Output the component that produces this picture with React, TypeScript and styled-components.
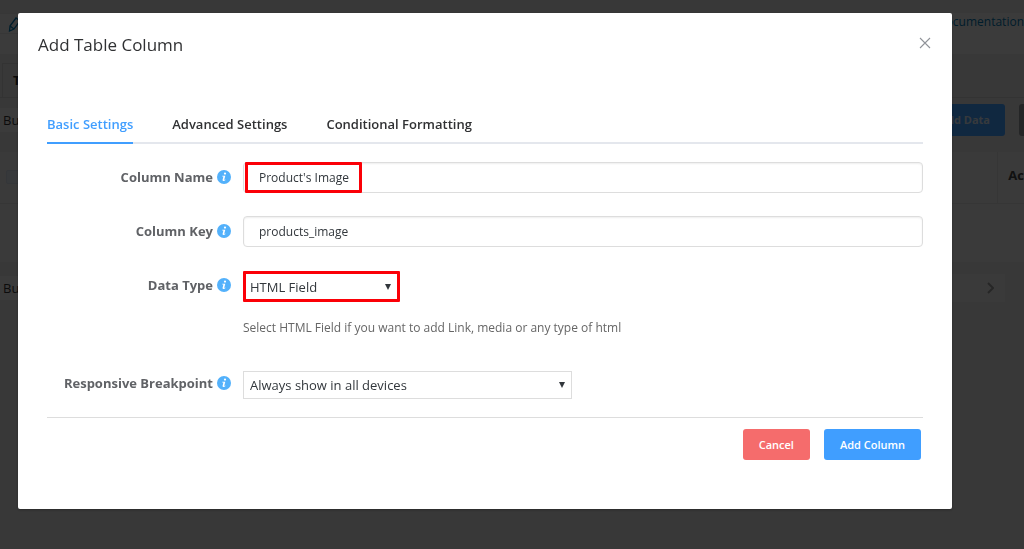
import React from "react";
import styled, { createGlobalStyle, css } from "styled-components";

const GlobalStyle = createGlobalStyle`
  *, *::before, *::after { box-sizing: border-box; }
  body {
    margin: 0;
    background: #dedede;
    font-family: "Open Sans", "Noto Sans", sans-serif;
    font-size: 13px;
    color: #444;
  }
  button, input, select { font-family: inherit; }
`;

/* ---------- admin page under the dialog ---------- */

const Page = styled.div`
  min-height: 100vh;
  overflow: hidden;
`;

const TopBar = styled.header`
  display: flex;
  justify-content: space-between;
  margin-top: 13px;
  height: 41px;
  background: #ececec;
`;

const EditLink = styled.a`
  display: flex;
  align-items: center;
  width: 120px;
  height: 21px;
  padding-left: 8px;
  border: 1px solid #dcdcdc;
  border-left: 0;
  color: #0073aa;
`;

const DocLink = styled.a`
  font-size: 12px;
  line-height: 18px;
  color: #0073aa;
  text-decoration: none;
`;

const PageTabs = styled.nav`
  display: flex;
  height: 44px;
  padding: 9px 0 0 2px;
  border-bottom: 1px solid #ccc;
`;

const PageTab = styled.a`
  width: 110px;
  padding-left: 10px;
  border: 1px solid #ccc;
  border-bottom: 0;
  font-weight: 700;
  line-height: 33px;
  color: #222;
  text-decoration: none;
`;

const ActionBar = styled.div<{ $foot?: boolean }>`
  display: flex;
  justify-content: space-between;
  align-items: center;
  height: 54px;
  padding-bottom: ${(p) => (p.$foot ? 3 : 11)}px;
`;

const BulkButton = styled.button`
  width: 120px;
  height: 26px;
  padding: 0 3px;
  border: 1px solid #ddd;
  border-left: 0;
  background: #ececec;
  font-size: 13px;
  text-align: left;
  color: #333;
`;

const ActionGroup = styled.div`
  display: flex;
  gap: 14px;
`;

const DataButton = styled.button<{ $grey?: boolean }>`
  width: ${(p) => (p.$grey ? 20 : 86)}px;
  margin-right: ${(p) => (p.$grey ? -15 : 0)}px;
  height: 32px;
  padding: 0 ${(p) => (p.$grey ? 0 : 15)}px;
  border: 0;
  border-radius: 3px;
  background: ${(p) => (p.$grey ? "#909399" : "#409eff")};
  font-size: 11px;
  font-weight: 700;
  text-align: right;
  color: #d8e4f0;
  white-space: nowrap;
`;

const Records = styled.table`
  width: 100%;
  height: 110px;
  border-collapse: collapse;
  background: #e6e6e6;

  th { height: 51px; border-bottom: 1px solid #d8d8d8; text-align: left; padding: 0 6px; }
  th:last-child { width: 25px; padding: 0 0 4px 10px; border-left: 1px solid #d8d8d8; }
`;

const RowTick = styled.input`
  appearance: none;
  display: block;
  width: 14px;
  height: 14px;
  margin: 0;
  border: 1px solid #cdd6e2;
  border-radius: 2px;
  background: #dce2ea;
`;

const Pager = styled.button`
  display: flex;
  align-items: center;
  justify-content: flex-end;
  width: 120px;
  height: 28px;
  margin-right: 19px;
  padding: 0 11px;
  border: 0;
  background: #e6e6e6;
  color: #999;
`;

/* ---------- dialog ---------- */

const Overlay = styled.div`
  position: fixed;
  inset: 0;
  padding: 13px 72px 0 18px;
  background: rgba(0, 0, 0, 0.75);
`;

const Dialog = styled.section`
  padding-bottom: 49px;
  border-radius: 2px;
  background: #fff;
  box-shadow: 0 1px 3px rgba(0, 0, 0, 0.3);
`;

const DialogHead = styled.header`
  display: flex;
  justify-content: space-between;
  align-items: flex-start;
  padding: 20px 20px 0;
`;

const Title = styled.h2`
  margin: 0;
  font-size: 17px;
  font-weight: 400;
  line-height: 24px;
  color: #303133;
`;

const CloseButton = styled.button`
  display: flex;
  padding: 3px 0;
  border: 0;
  background: none;
  color: #909399;
`;

const DialogBody = styled.form`
  padding: 49px 29px 0;
`;

const Tabs = styled.nav`
  display: flex;
  gap: 39px;
  height: 38px;
  margin-bottom: 18px;
  border-bottom: 2px solid #e4e7ed;
`;

const Tab = styled.button<{ $active?: boolean }>`
  height: 38px;
  padding: 0;
  border: 0;
  border-bottom: 2px solid ${(p) => (p.$active ? "#409eff" : "transparent")};
  background: none;
  font-size: 13px;
  font-weight: 600;
  color: ${(p) => (p.$active ? "#409eff" : "#303133")};
`;

const Field = styled.div<{ $gap: number }>`
  display: grid;
  grid-template-columns: 184px 1fr;
  column-gap: 12px;
  margin-bottom: ${(p) => p.$gap}px;
`;

const LabelCell = styled.div`
  display: flex;
  justify-content: flex-end;
  align-items: center;
  gap: 4px;
  height: 30px;
`;

const Label = styled.label`
  font-size: 13px;
  font-weight: 700;
  color: #606266;
`;

const TextInput = styled.input`
  display: block;
  width: 100%;
  height: 31px;
  padding: 0 15px;
  border: 1px solid #ddd;
  border-radius: 4px;
  background: #fff;
  box-shadow: inset 0 1px 2px rgba(0, 0, 0, 0.07);
  font-size: 12px;
  color: #32373c;
`;

const Marked = styled.div`
  position: relative;
`;

const Mark = styled.span<{ $wide?: boolean }>`
  position: absolute;
  top: ${(p) => (p.$wide ? 1 : 0)}px;
  left: ${(p) => (p.$wide ? 0 : 2)}px;
  width: ${(p) => (p.$wide ? 157 : 117)}px;
  height: 31px;
  border: 3px solid #fb0007;
  border-radius: 1px;
  pointer-events: none;
`;

const SelectWrap = styled.div<{ $width: number }>`
  display: flex;
  align-items: center;
  width: ${(p) => p.$width}px;
  height: 28px;
  margin-top: 3px;

  svg { flex: none; margin-left: -14px; pointer-events: none; }
`;

const Select = styled.select`
  appearance: none;
  flex: none;
  width: 100%;
  height: 28px;
  padding: 0 6px;
  border: 1px solid #ddd;
  border-radius: 0;
  background: #fff;
  font-size: 13px;
  color: #32373c;
`;

const Hint = styled.p`
  margin: 17px 0 0;
  font-size: 12px;
  line-height: 20px;
  color: #666;
`;

const Actions = styled.footer`
  display: flex;
  justify-content: flex-end;
  gap: 14px;
  padding: 11px 2px 0;
  border-top: 1px solid #ddd;
`;

const ActionButton = styled.button<{ $danger?: boolean }>`
  height: 31px;
  padding: 0 16px;
  border: 0;
  border-radius: 3px;
  font-size: 11px;
  font-weight: 600;
  color: #fff;
  ${(p) =>
    p.$danger
      ? css`background: #f56c6c;`
      : css`background: #409eff;`}
`;

const InfoIcon = () => (
  <svg width="14" height="14" viewBox="0 0 14 14" aria-hidden="true">
    <circle cx="7" cy="7" r="7" fill="#53b1fb" />
    <circle cx="8" cy="3.6" r="1.1" fill="#fff" />
    <path d="M5.300 5.700 H8.300 L7.300 9.600 Q7.200 10.200 8.300 9.500 L8.500 9.900 Q7.300 11.200 6.200 11 Q5.300 10.800 5.600 9.800 L6.400 6.500 L5.200 6.400 Z" fill="#fff" />
  </svg>
);

const Arrow = () => (
  <svg width="8" height="6" viewBox="0 0 8 6" aria-hidden="true">
    <path d="M1 0 H7 L4 6 Z" fill="#32373c" />
  </svg>
);

const LabelWithInfo = ({ id, text }: { id: string; text: string }) => (
  <LabelCell>
    <Label htmlFor={id}>{text}</Label>
    <InfoIcon />
  </LabelCell>
);

export default function App() {
  return (
    <>
      <GlobalStyle />
      <Page>
        <TopBar>
          <EditLink href="#edit" aria-label="Edit">
            <svg width="14" height="16" viewBox="0 0 14 16" fill="none" stroke="currentColor" strokeWidth="1.3">
              <path d="M2 10 L8 2 L12 5 L6 13 L1.500 15 Z M2 10 L6 13" />
            </svg>
          </EditLink>
          <DocLink href="#docs">Documentation</DocLink>
        </TopBar>
        <PageTabs>
          <PageTab href="#rows">Table</PageTab>
        </PageTabs>
        <ActionBar>
          <BulkButton>Bulk</BulkButton>
          <ActionGroup>
            <DataButton>Add Data</DataButton>
            <DataButton $grey aria-label="More" />
          </ActionGroup>
        </ActionBar>
        <Records>
          <thead>
            <tr>
              <th><RowTick type="checkbox" aria-label="Select all" /></th>
              <th>Ac</th>
            </tr>
          </thead>
          <tbody>
            <tr><td /><td /></tr>
          </tbody>
        </Records>
        <ActionBar $foot>
          <BulkButton>Bulk</BulkButton>
          <Pager aria-label="Next page">
            <svg width="7" height="12" viewBox="0 0 7 12" fill="none" stroke="currentColor" strokeWidth="2">
              <path d="M1 1 L6 6 L1 11" />
            </svg>
          </Pager>
        </ActionBar>
      </Page>

      <Overlay>
        <Dialog role="dialog" aria-labelledby="dialog-title">
          <DialogHead>
            <Title id="dialog-title">Add Table Column</Title>
            <CloseButton aria-label="Close">
              <svg width="14" height="14" viewBox="0 0 14 14" fill="none" stroke="currentColor" strokeWidth="1.1">
                <path d="M2 2 L12 12 M12 2 L2 12" />
              </svg>
            </CloseButton>
          </DialogHead>
          <DialogBody>
            <Tabs>
              <Tab type="button" $active>Basic Settings</Tab>
              <Tab type="button">Advanced Settings</Tab>
              <Tab type="button">Conditional Formatting</Tab>
            </Tabs>
            <Field $gap={23}>
              <LabelWithInfo id="name" text="Column Name" />
              <Marked>
                <TextInput id="name" defaultValue="Product's Image" />
                <Mark />
              </Marked>
            </Field>
            <Field $gap={23}>
              <LabelWithInfo id="key" text="Column Key" />
              <TextInput id="key" defaultValue="products_image" />
            </Field>
            <Field $gap={30}>
              <LabelWithInfo id="type" text="Data Type" />
              <Marked>
                <SelectWrap $width={155}>
                  <Select id="type"><option>HTML Field</option></Select>
                  <Arrow />
                </SelectWrap>
                <Mark $wide />
                <Hint>Select HTML Field if you want to add Link, media or any type of html</Hint>
              </Marked>
            </Field>
            <Field $gap={18}>
              <LabelWithInfo id="breakpoint" text="Responsive Breakpoint" />
              <SelectWrap $width={329}>
                <Select id="breakpoint"><option>Always show in all devices</option></Select>
                <Arrow />
              </SelectWrap>
            </Field>
            <Actions>
              <ActionButton type="button" $danger>Cancel</ActionButton>
              <ActionButton type="button">Add Column</ActionButton>
            </Actions>
          </DialogBody>
        </Dialog>
      </Overlay>
    </>
  );
}
